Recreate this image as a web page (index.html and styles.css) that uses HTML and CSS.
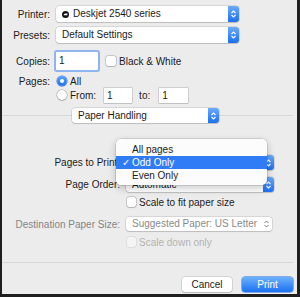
FILE: index.html
```html
<!DOCTYPE html>
<html>
<head>
<meta charset="utf-8">
<link rel="stylesheet" href="styles.css">
</head>
<body>
<div class="win">
  <div class="top">
    <div class="row r-printer">
      <span class="lbl">Printer:</span>
      <div class="popup w-main">
        <span class="picon"><svg width="7" height="7" viewBox="0 0 7 7"><circle cx="3.5" cy="3.5" r="3.5" fill="#111"/><path d="M1.6 4.3 Q1.6 2.6 3.4 2.6 L5.4 2.6 L5.4 4.3 Z" fill="#fff"/></svg></span>
        <span class="ptext">Deskjet 2540 series</span>
        <span class="stepper"><svg width="7" height="10" viewBox="0 0 7 10"><path d="M1.5 4 L3.5 2 L5.5 4 M1.5 6 L3.5 8 L5.5 6" fill="none" stroke="#fff" stroke-width="1.1"/></svg></span>
      </div>
    </div>
    <div class="row r-presets">
      <span class="lbl">Presets:</span>
      <div class="popup w-main">
        <span class="ptext">Default Settings</span>
        <span class="stepper"><svg width="7" height="10" viewBox="0 0 7 10"><path d="M1.5 4 L3.5 2 L5.5 4 M1.5 6 L3.5 8 L5.5 6" fill="none" stroke="#fff" stroke-width="1.1"/></svg></span>
      </div>
    </div>
    <div class="row r-copies">
      <span class="lbl">Copies:</span>
      <div class="field focus">1</div>
      <span class="check"></span>
      <span class="ctext">Black &amp; White</span>
    </div>
    <div class="row r-pages">
      <span class="lbl">Pages:</span>
      <span class="radio on"></span>
      <span class="rtext">All</span>
    </div>
    <div class="row r-from">
      <span class="lbl"></span>
      <span class="radio"></span>
      <span class="rtext">From:</span>
      <div class="field small f-from">1</div>
      <span class="totext">to:</span>
      <div class="field small f-to">1</div>
    </div>
  </div>

  <div class="handling">
    <span class="hline left"></span>
    <div class="popup w-hand">
      <span class="ptext">Paper Handling</span>
      <span class="stepper"><svg width="7" height="10" viewBox="0 0 7 10"><path d="M1.5 4 L3.5 2 L5.5 4 M1.5 6 L3.5 8 L5.5 6" fill="none" stroke="#fff" stroke-width="1.1"/></svg></span>
    </div>
    <span class="hline right"></span>
  </div>

  <div class="lower">
    <div class="lrow r-ptp">
      <span class="llbl">Pages to Print:</span>
      <div class="popup w-low">
        <span class="ptext">Odd Only</span>
        <span class="stepper"><svg width="7" height="10" viewBox="0 0 7 10"><path d="M1.5 4 L3.5 2 L5.5 4 M1.5 6 L3.5 8 L5.5 6" fill="none" stroke="#fff" stroke-width="1.1"/></svg></span>
      </div>
    </div>
    <div class="lrow r-order">
      <span class="llbl">Page Order:</span>
      <div class="popup w-low">
        <span class="ptext">Automatic</span>
        <span class="stepper"><svg width="7" height="10" viewBox="0 0 7 10"><path d="M1.5 4 L3.5 2 L5.5 4 M1.5 6 L3.5 8 L5.5 6" fill="none" stroke="#fff" stroke-width="1.1"/></svg></span>
      </div>
    </div>
    <div class="lrow r-scale">
      <span class="llbl"></span>
      <span class="check lc"></span>
      <span class="ctext">Scale to fit paper size</span>
    </div>
    <div class="lrow r-dest">
      <span class="llbl dis">Destination Paper Size:</span>
      <div class="popup w-dest disabled">
        <span class="ptext">Suggested Paper: US Letter</span>
        <span class="chev"><svg width="7" height="10" viewBox="0 0 7 10"><path d="M1.5 4 L3.5 2 L5.5 4 M1.5 6 L3.5 8 L5.5 6" fill="none" stroke="#7a7a7a" stroke-width="1"/></svg></span>
      </div>
    </div>
    <div class="lrow r-down">
      <span class="llbl"></span>
      <span class="check lc dis"></span>
      <span class="ctext dis2">Scale down only</span>
    </div>
  </div>

  <div class="sep"></div>

  <div class="buttons">
    <span class="btn cancel">Cancel</span>
    <span class="btn print">Print</span>
  </div>

  <div class="menu">
    <div class="mi">All pages</div>
    <div class="mi sel"><span class="tick">✓</span>Odd Only</div>
    <div class="mi">Even Only</div>
  </div>
</div>
</body>
</html>
```

FILE: styles.css
```css
* { box-sizing: border-box; margin: 0; padding: 0; }

body {
  margin: 0;
  width: 300px;
  height: 297px;
  background: #1f1f1f;
  font-family: "Liberation Sans", Arial, sans-serif;
  font-size: 10px;
  color: #1b1b1b;
  overflow: hidden;
}

.win {
  position: relative;
  margin-left: 2px;
  width: 295px;
  height: 294px;
  background: #ececec;
}

.top {
  padding-top: 6px;
  display: flex;
  flex-direction: column;
}

.row { display: flex; align-items: center; }

.lbl {
  width: 48px;
  margin-right: 6px;
  text-align: right;
  flex: none;
}

.r-presets { margin-top: 5px; }
.r-copies { margin-top: 9px; height: 18px; }
.r-pages { margin-top: 6px; height: 10px; }
.r-from { margin-top: 1px; height: 16px; }

.popup {
  position: relative;
  display: flex;
  align-items: center;
  height: 16px;
  padding-left: 6px;
  background: #fff;
  border-radius: 3px;
  box-shadow: 0 0 0 0.5px rgba(0,0,0,0.18), 0 1px 1px rgba(0,0,0,0.12);
  flex: none;
}

.w-main { width: 183px; }
.w-hand { width: 147px; height: 15px; }
.w-low { width: 148px; height: 15px; }
.w-dest { width: 146px; height: 14px; }

.ptext { flex: 1; white-space: nowrap; line-height: 12px; }

.picon { display: flex; margin-right: 4px; }

.stepper {
  align-self: stretch;
  width: 11px;
  display: flex;
  align-items: center;
  justify-content: center;
  border-radius: 0 3px 3px 0;
  background: linear-gradient(#6aabfb, #1b6ff0);
}

.chev {
  width: 12px;
  display: flex;
  align-items: center;
  justify-content: center;
}

.disabled .ptext { color: #8a8a8a; }

.field {
  width: 42px;
  height: 18px;
  background: #fff;
  padding-left: 3px;
  line-height: 18px;
  box-shadow: 0 0 0 0.5px rgba(0,0,0,0.25);
  flex: none;
}

.field.focus {
  box-shadow: 0 0 0 2px #8fb5ee;
  border-radius: 1px;
}

.field.small {
  height: 15px;
  line-height: 15px;
  box-shadow: 0 0 0 0.5px rgba(0,0,0,0.25), 0 1px 0 rgba(0,0,0,0.06);
}

.f-from { width: 28px; margin-left: 8px; }
.f-to { width: 29px; margin-left: 9px; }
.totext { margin-left: 7px; }

.check {
  width: 10px;
  height: 10px;
  background: #fff;
  border-radius: 2px;
  box-shadow: 0 0 0 0.5px rgba(0,0,0,0.3), 0 1px 1px rgba(0,0,0,0.1);
  margin-left: 8px;
  margin-right: 3px;
  flex: none;
}

.check.lc { margin-left: 1px; width: 9px; height: 10px; }
.check.dis { box-shadow: 0 0 0 0.5px rgba(0,0,0,0.12); background: #f4f4f4; }

.radio {
  width: 10px;
  height: 10px;
  border-radius: 50%;
  background: #fff;
  box-shadow: 0 0 0 0.5px rgba(0,0,0,0.35), 0 1px 1px rgba(0,0,0,0.1);
  margin-left: 1px;
  margin-right: 3px;
  flex: none;
  position: relative;
}

.radio.on {
  background: linear-gradient(#5aa2fa, #1f72f0);
  box-shadow: 0 0 0 0.5px #1a66d8;
}

.radio.on::after {
  content: "";
  position: absolute;
  left: 3px;
  top: 3px;
  width: 4px;
  height: 4px;
  border-radius: 50%;
  background: #fff;
}

.handling {
  display: flex;
  align-items: center;
  margin-top: 5px;
  height: 15px;
}

.hline {
  height: 1px;
  background: #d8d8d8;
}

.hline.left { width: 70px; }
.hline.right { flex: 1; margin-right: 4px; }

.lower {
  display: flex;
  flex-direction: column;
}

.lrow { display: flex; align-items: center; }

.llbl {
  width: 118px;
  margin-right: 6px;
  text-align: right;
  flex: none;
  white-space: nowrap;
}

.llbl.dis { color: #858585; }
.dis2 { color: #b3b3b3; }

.r-ptp { margin-top: 32px; height: 15px; }
.r-order { margin-top: 7px; height: 15px; }
.r-scale { margin-top: 5px; height: 10px; }
.r-dest { margin-top: 10px; height: 14px; }
.r-down { margin-top: 6px; height: 10px; }

.sep {
  margin-top: 15px;
  height: 1px;
  margin-right: 4px;
  background: #d8d8d8;
}

.buttons {
  display: flex;
  justify-content: flex-end;
  gap: 10px;
  margin-top: 14px;
  margin-right: 4px;
}

.btn {
  height: 15px;
  line-height: 15px;
  text-align: center;
  border-radius: 3px;
}

.cancel {
  width: 50px;
  background: #fff;
  box-shadow: 0 0 0 0.5px rgba(0,0,0,0.2), 0 1px 1px rgba(0,0,0,0.12);
}

.print {
  width: 51px;
  color: #fff;
  background: linear-gradient(#6db1fc, #1a70f1);
  box-shadow: 0 0 0 0.5px #1b68dc;
}

.menu {
  position: absolute;
  left: 114px;
  top: 139px;
  width: 151px;
  height: 46px;
  padding-top: 4px;
  background: rgba(252,252,252,0.97);
  border-radius: 5px;
  box-shadow: 0 0 0 0.5px rgba(0,0,0,0.2), 0 3px 9px rgba(0,0,0,0.22);
}

.mi {
  position: relative;
  height: 13px;
  line-height: 13px;
  padding-left: 16px;
  white-space: nowrap;
}

.mi.sel {
  background: #2f7cf6;
  color: #fff;
}

.tick {
  position: absolute;
  left: 6px;
  top: 0;
}
```
